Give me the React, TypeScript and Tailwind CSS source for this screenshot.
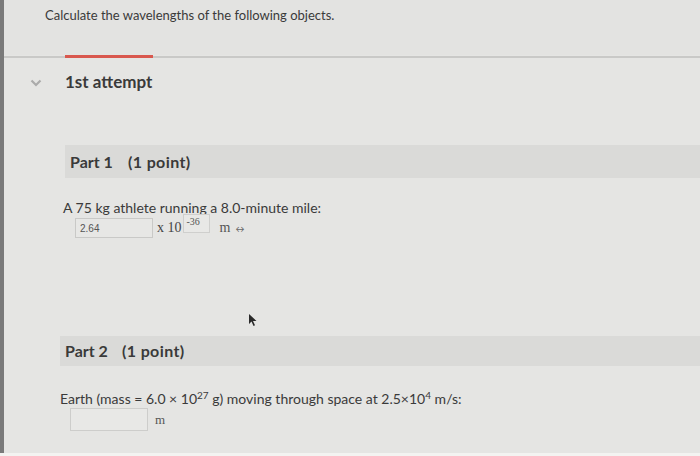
import React from "react";

export default function App() {
  const sans = { fontFamily: "Lato, 'Open Sans', sans-serif" };
  const serif = { fontFamily: "'Liberation Serif', 'DejaVu Serif', serif" };
  return (
    <div className="relative flex flex-col w-[700px] h-[456px] bg-[#e5e5e3] text-[#3d3d3d] overflow-hidden" style={sans}>
      <div className="flex flex-1">
        <div className="w-[4px] bg-[#7a7a7a]" />
        <div className="flex-1 flex flex-col">
          <div className="h-[55px] pl-[41px] pt-[6px] text-[13px] leading-[18px] text-[#3a3a3a] bg-[#e3e3e1]">
            Calculate the wavelengths of the following objects.
          </div>
          <div className="flex h-[3px] items-end">
            <div className="w-[61px] h-[2px] bg-[#c9c9c7]" />
            <div className="w-[88px] h-[3px] bg-[#d9584e]" />
            <div className="flex-1 h-[2px] bg-[#c9c9c7]" />
          </div>
          <div className="mt-[12px] h-[24px] flex items-center pl-[26px]">
            <svg width="12" height="8" viewBox="0 0 12 8" className="mt-[2px]">
              <path d="M1.5 1.5 L6 6 L10.5 1.5" fill="none" stroke="#ababab" strokeWidth="2.2" />
            </svg>
            <span className="ml-[23px] text-[17px] font-bold text-[#3a3a3a]">1st attempt</span>
          </div>
          <div className="mt-[51px] ml-[61px] h-[33px] bg-[#dadad8] flex items-center pl-[5px] text-[16px] font-bold text-[#3a3a3a]">
            <span>Part 1</span>
            <span className="ml-[15px] tracking-[0.4px]">(1 point)</span>
          </div>
          <div className="mt-[21px] ml-[59px] text-[14px] leading-[18px] text-[#3a3a3a]">
            A 75 kg athlete running a 8.0-minute mile:
          </div>
          <div className="ml-[71px] mt-[-3px] flex items-start">
            <div className="mt-[4px] w-[78px] h-[20px] border border-[#c9c9c7] bg-[#e7e7e5] flex items-center pl-[4px] text-[10px] text-[#555]" style={{ fontFamily: "'Liberation Sans', sans-serif" }}>
              2.64
            </div>
            <div className="mt-[5px] ml-[4px] text-[14px] leading-[18px] text-[#444]" style={serif}>x 10</div>
            <div className="ml-[1px] w-[27px] h-[19px] border border-[#cfcfcd] bg-[#e8e8e6] text-[10px] leading-[13px] pl-[3px] text-[#555]" style={serif}>-36</div>
            <div className="mt-[6px] ml-[10px] text-[14px] leading-[16px] text-[#555]" style={serif}>m</div>
            <div className="mt-[7px] ml-[5px] text-[9px] leading-[16px] text-[#666]">↔</div>
          </div>
          <div className="mt-[98px] ml-[56px] h-[30px] bg-[#dadad8] flex items-center pl-[5px] text-[16px] font-bold text-[#3a3a3a]">
            <span>Part 2</span>
            <span className="ml-[14px] tracking-[0.4px]">(1 point)</span>
          </div>
          <div className="mt-[24px] ml-[56px] text-[14px] leading-[18px] text-[#3a3a3a]">
            Earth (mass = 6.0 × 10<sup className="text-[10px]">27</sup> g) moving through space at 2.5×10<sup className="text-[10px]">4</sup> m/s:
          </div>
          <div className="ml-[66px] mt-[0px] flex items-center">
            <div className="w-[78px] h-[23px] border border-[#cdcdcb] bg-[#e8e8e6]" />
            <div className="ml-[7px] text-[13px] text-[#555]" style={serif}>m</div>
          </div>
        </div>
      </div>
      <div className="h-[3px] bg-[#f3f3f1]" />
      <svg className="absolute left-[248px] top-[313px]" width="10" height="14" viewBox="0 0 10 14">
        <path d="M1 1 L1 11 L3.5 8.5 L5.5 13 L7 12.3 L5 8 L8.5 8 Z" fill="#2a2a2a" />
      </svg>
    </div>
  );
}
